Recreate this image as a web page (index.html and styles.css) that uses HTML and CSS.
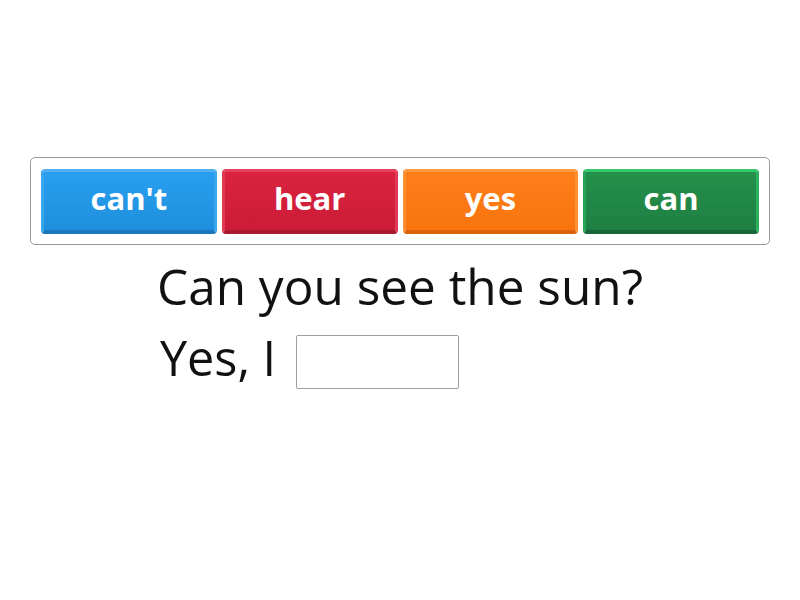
FILE: index.html
```html
<!DOCTYPE html>
<html>
<head>
<meta charset="utf-8">
<link rel="stylesheet" href="styles.css">
</head>
<body>
<div class="page">
  <div class="bank">
    <div class="tile blue">can't</div>
    <div class="tile red">hear</div>
    <div class="tile orange">yes</div>
    <div class="tile green">can</div>
  </div>
  <div class="content">
    <div class="lines">
      <div class="line q">Can you see the sun?</div>
      <div class="line a">Yes, I <span class="slot"></span></div>
    </div>
  </div>
</div>
</body>
</html>
```
FILE: styles.css
```css
html, body {
  margin: 0;
  padding: 0;
  background: #fff;
  font-family: "Open Sans", "DejaVu Sans", sans-serif;
}
.page {
  width: 800px;
  height: 600px;
  padding-top: 157px;
  box-sizing: border-box;
}
.bank {
  margin: 0 30px;
  border: 1px solid #9a9a9a;
  border-radius: 5px;
  padding: 11px 10px 10px 10px;
  display: flex;
  gap: 5px;
  height: 88px;
  box-sizing: border-box;
}
.tile {
  flex: 1;
  height: 65px;
  box-sizing: border-box;
  border-radius: 4px;
  color: #fff;
  font-weight: 700;
  font-size: 31px;
  display: flex;
  align-items: center;
  justify-content: center;
  border-style: solid;
  border-width: 3px 3px 4px 3px;
  padding-bottom: 6px;
}
.blue {
  background: linear-gradient(#2a9ff0, #1e8fdc);
  border-color: #55b0f2 #3aa6ee #1a78bf #3aa6ee;
}
.red {
  background: linear-gradient(#da2340, #cc1c37);
  border-color: #e4415a #e03a52 #a9182d #e03a52;
}
.orange {
  background: linear-gradient(#ff7f1a, #f8740f);
  border-color: #ff9a40 #ff8f30 #d9620a #ff8f30;
}
.green {
  background: linear-gradient(#24904b, #1e8043);
  border-color: #33c96a #2bb35c #17663a #27a456;
}
.content {
  display: flex;
  justify-content: center;
  padding-top: 6px;
}
.lines {
  color: #111;
}
.line.q {
  font-size: 49.5px;
  line-height: 70px;
}
.line.a {
  font-size: 48.5px;
  display: flex;
  align-items: center;
  padding-left: 3px;
  line-height: 72px;
}
.slot {
  display: inline-block;
  width: 163px;
  height: 54px;
  border: 1px solid #9e9e9e;
  border-radius: 2px;
  margin-left: 20px;
  margin-top: 10px;
  box-sizing: border-box;
}
```
